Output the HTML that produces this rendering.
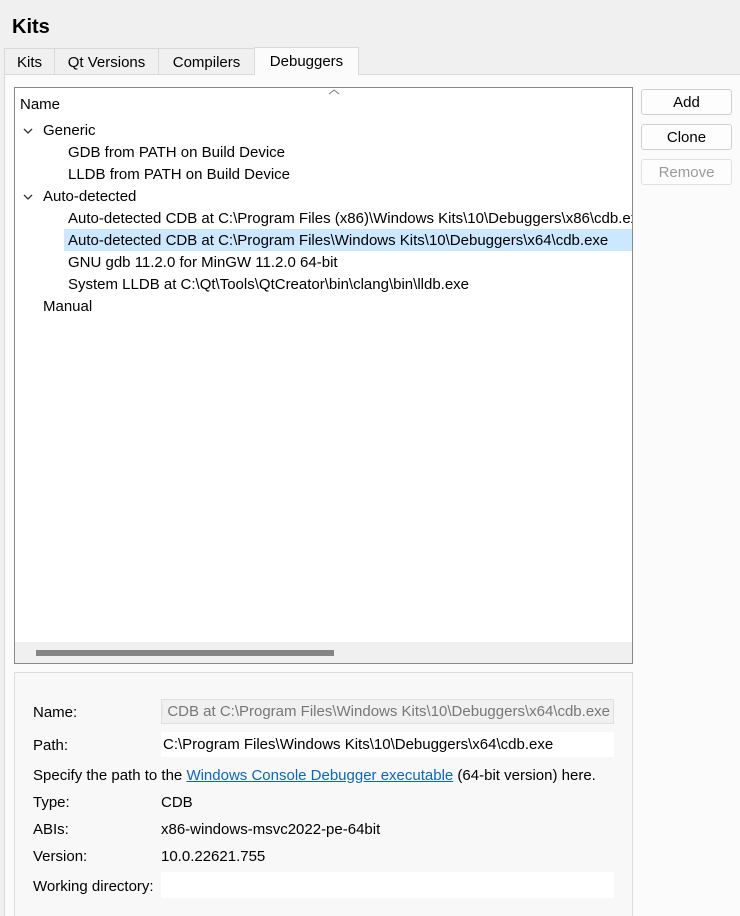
<!DOCTYPE html>
<html style="overflow:hidden;height:916px"><head><style>
body{margin:0;width:740px;height:916px;background:#f0f0f0;font-family:"Liberation Sans",sans-serif;font-size:15px;color:#000;position:relative;overflow:hidden}
.a{position:absolute;white-space:nowrap}
.tab{position:absolute;top:48px;height:26px;border:1px solid #d9d9d9;border-bottom:none;background:#f0f0f0;box-sizing:border-box;text-align:center;line-height:27px}
.btn{position:absolute;left:641px;width:91px;height:26px;border:1px solid #d0d0d0;border-radius:3px;background:#fdfdfd;box-sizing:border-box;text-align:center;line-height:26px}
.r{position:absolute;left:0;height:22px;line-height:24px;white-space:nowrap}
.inp{position:absolute;left:161px;width:453px;height:25px;box-sizing:border-box;line-height:25px;padding-left:2px;overflow:hidden;white-space:nowrap}
</style></head><body>
<div class="a" style="left:12px;top:16px;font-size:20px;font-weight:bold">Kits</div>
<div style="position:absolute;left:4px;top:74px;width:740px;height:842px;background:#fbfbfb;border-left:1px solid #d9d9d9;border-top:1px solid #d9d9d9"></div>
<div class="tab" style="left:4px;width:51px">Kits</div>
<div class="tab" style="left:54px;width:105px">Qt Versions</div>
<div class="tab" style="left:158px;width:97px">Compilers</div>
<div class="tab" style="left:254px;top:47px;height:28px;width:105px;background:#fbfbfb;line-height:28px">Debuggers</div>

<div style="position:absolute;left:14px;top:87px;width:619px;height:577px;background:#fff;border:1px solid #888;box-sizing:border-box;overflow:hidden">
 <svg style="position:absolute;left:313px;top:0" width="12" height="8"><path d="M1 6 L6 2 L11 6" fill="none" stroke="#777" stroke-width="1"/></svg>
 <div class="r" style="left:5px;top:5px">Name</div>
 <svg style="position:absolute;left:8px;top:39px" width="10" height="8"><path d="M1 2 L5 6 L9 2" fill="none" stroke="#333" stroke-width="1.3"/></svg>
 <div class="r" style="left:28px;top:31px">Generic</div>
 <div class="r" style="left:53px;top:53px">GDB from PATH on Build Device</div>
 <div class="r" style="left:53px;top:75px">LLDB from PATH on Build Device</div>
 <svg style="position:absolute;left:8px;top:105px" width="10" height="8"><path d="M1 2 L5 6 L9 2" fill="none" stroke="#333" stroke-width="1.3"/></svg>
 <div class="r" style="left:28px;top:97px">Auto-detected</div>
 <div class="r" style="left:53px;top:119px">Auto-detected CDB at C:\Program Files (x86)\Windows Kits\10\Debuggers\x86\cdb.exe</div>
 <div class="r" style="left:49px;top:141px;width:570px;background:#cce8ff;padding-left:4px">Auto-detected CDB at C:\Program Files\Windows Kits\10\Debuggers\x64\cdb.exe</div>
 <div class="r" style="left:53px;top:163px">GNU gdb 11.2.0 for MinGW 11.2.0 64-bit</div>
 <div class="r" style="left:53px;top:185px">System LLDB at C:\Qt\Tools\QtCreator\bin\clang\bin\lldb.exe</div>
 <div class="r" style="left:28px;top:207px">Manual</div>
 <div style="position:absolute;left:0;top:554px;width:619px;height:22px;background:#f0f0f0"></div>
 <div style="position:absolute;left:21px;top:562px;width:298px;height:6px;background:#858585"></div>
</div>

<div class="btn" style="top:89px">Add</div>
<div class="btn" style="top:124px">Clone</div>
<div class="btn" style="top:159px;color:#9a9a9a;border-color:#e0e0e0">Remove</div>

<div style="position:absolute;left:14px;top:672px;width:619px;height:260px;background:#f8f8f8;border:1px solid #dcdcdc;box-sizing:border-box"></div>
<div class="a" style="left:33px;top:704px">Name:</div>
<div class="inp" style="top:699px;background:#f0f0f0;border:1px solid #e0e0e0;color:#777"><span style="position:absolute;right:3px;top:0;line-height:24px">Auto-detected CDB at C:\Program Files\Windows Kits\10\Debuggers\x64\cdb.exe</span></div>
<div class="a" style="left:33px;top:737px">Path:</div>
<div class="inp" style="top:732px;background:#fff">C:\Program Files\Windows Kits\10\Debuggers\x64\cdb.exe</div>
<div class="a" style="left:33px;top:767px">Specify the path to the <span style="color:#0a66c2;text-decoration:underline">Windows Console Debugger executable</span> (64-bit version) here.</div>
<div class="a" style="left:33px;top:794px">Type:</div><div class="a" style="left:161px;top:794px">CDB</div>
<div class="a" style="left:33px;top:821px">ABIs:</div><div class="a" style="left:161px;top:821px">x86-windows-msvc2022-pe-64bit</div>
<div class="a" style="left:33px;top:848px">Version:</div><div class="a" style="left:161px;top:848px">10.0.22621.755</div>
<div class="a" style="left:33px;top:878px">Working directory:</div>
<div class="inp" style="top:872px;height:26px;background:#fff"></div>
</body></html>
